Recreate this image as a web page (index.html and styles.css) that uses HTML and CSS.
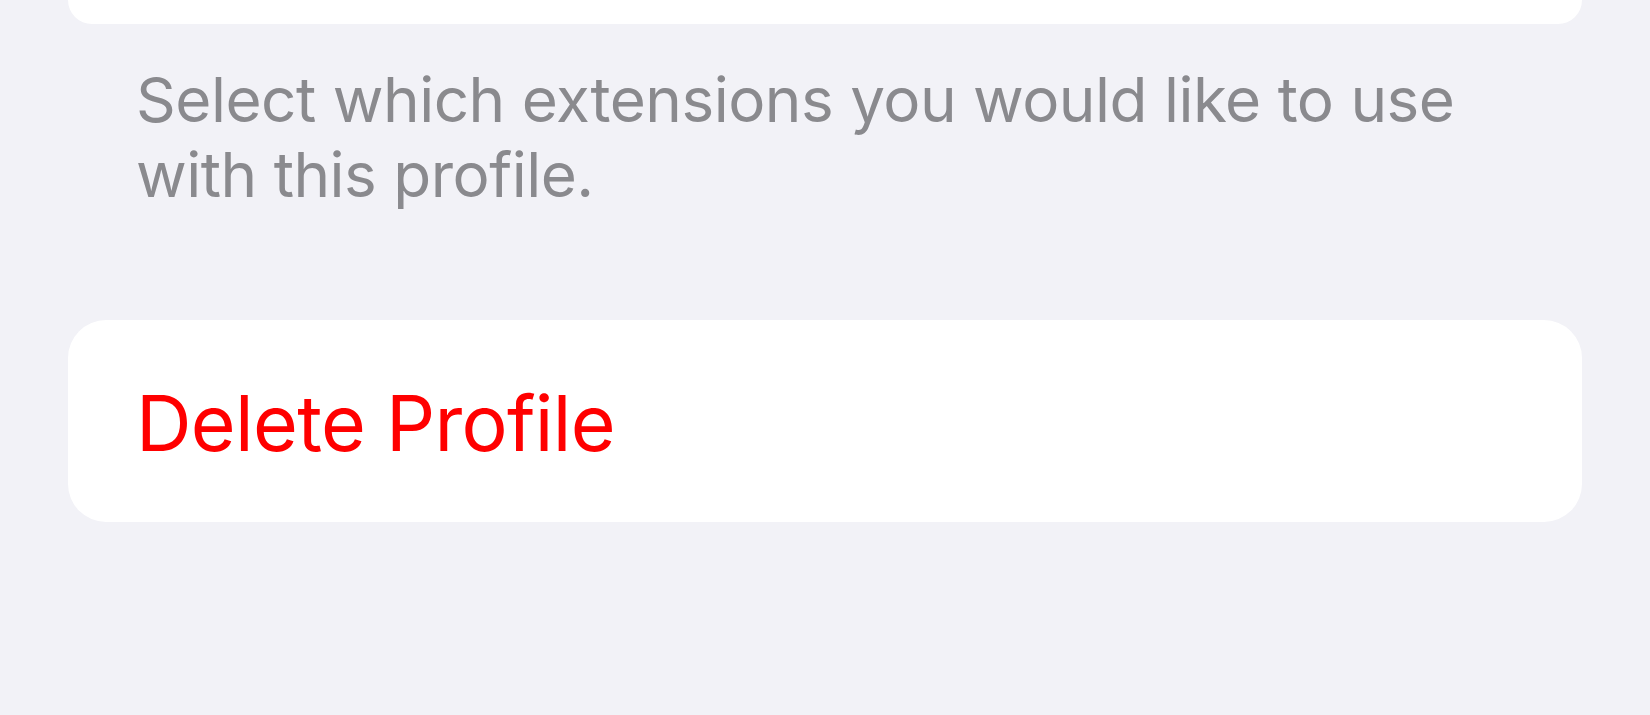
FILE: index.html
```html
<!DOCTYPE html>
<html lang="en">
<head>
<meta charset="utf-8">
<title>Profile</title>
<link rel="stylesheet" href="styles.css">
</head>
<body>
<main class="page">
  <section class="group">
    <div class="card card-top"></div>
    <p class="footer">Select which extensions you would like to use with this profile.</p>
  </section>
  <section class="group group-delete">
    <div class="card card-action">
      <button class="delete" type="button">Delete Profile</button>
    </div>
  </section>
</main>
</body>
</html>
```

FILE: styles.css
```css
html, body {
  margin: 0;
  padding: 0;
  background: #f2f2f7;
}

body {
  font-family: Inter, "Liberation Sans", Arial, sans-serif;
  width: 1650px;
  height: 715px;
  overflow: hidden;
}

.page {
  display: flex;
  flex-direction: column;
  padding: 0 68px;
}

.group {
  display: flex;
  flex-direction: column;
}

.card {
  background: #ffffff;
  border-radius: 38px;
}

.card-top {
  height: 24px;
  border-top-left-radius: 0;
  border-top-right-radius: 0;
}

.footer {
  margin: 38px 0 0;
  padding: 0 68px;
  font-size: 62px;
  line-height: 75px;
  letter-spacing: -0.5px;
  color: #8a8a8e;
}

.group-delete {
  margin-top: 108px;
}

.card-action {
  height: 202px;
  box-sizing: border-box;
  padding: 58px 68px 54px;
  display: flex;
  align-items: flex-start;
}

.delete {
  appearance: none;
  border: 0;
  background: none;
  padding: 0;
  margin: 0;
  font-family: Inter, "Liberation Sans", Arial, sans-serif;
  font-size: 77px;
  line-height: 90px;
  letter-spacing: -0.7px;
  color: #ff0000;
  cursor: pointer;
}
```
